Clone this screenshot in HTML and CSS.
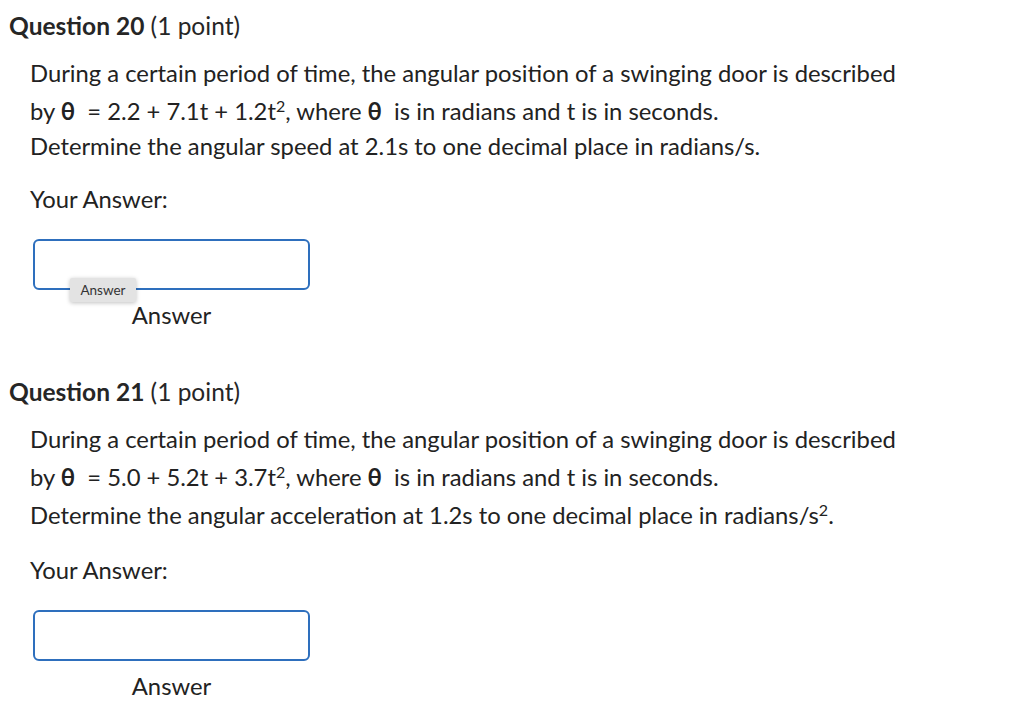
FILE: index.html
```html
<!DOCTYPE html>
<html>
<head>
<meta charset="utf-8">
<link rel="stylesheet" href="styles.css">
</head>
<body>
<section class="question q20">
  <h2 class="q-title"><strong>Question 20</strong> (1 point)</h2>
  <div class="q-body">
    <p class="q-text">During a certain period of time, the angular position of a swinging door is described<br>by <b class="theta">θ</b>&nbsp; = 2.2 + 7.1t + 1.2t<sup>2</sup>, where <b class="theta">θ</b>&nbsp; is in radians and t is in seconds.<br>Determine the angular speed at 2.1s to one decimal place in radians/s.</p>
    <p class="your-answer">Your Answer:</p>
    <div class="answer-field">
      <div class="input-box"></div>
      <span class="tooltip">Answer</span>
      <div class="answer-label">Answer</div>
    </div>
  </div>
</section>
<section class="question q21">
  <h2 class="q-title"><strong>Question 21</strong> (1 point)</h2>
  <div class="q-body">
    <p class="q-text">During a certain period of time, the angular position of a swinging door is described<br>by <b class="theta">θ</b>&nbsp; = 5.0 + 5.2t + 3.7t<sup>2</sup>, where <b class="theta">θ</b>&nbsp; is in radians and t is in seconds.<br>Determine the angular acceleration at 1.2s to one decimal place in radians/s<sup>2</sup>.</p>
    <p class="your-answer">Your Answer:</p>
    <div class="answer-field">
      <div class="input-box"></div>
      <div class="answer-label">Answer</div>
    </div>
  </div>
</section>
</body>
</html>
```
FILE: styles.css
```css
html, body {
  margin: 0;
  padding: 0;
  background: #ffffff;
}
body {
  font-family: Lato, "Open Sans", sans-serif;
  color: #222222;
  width: 1024px;
  height: 711px;
  overflow: hidden;
}
.question {
  padding-left: 9px;
}
.q20 {
  padding-top: 11px;
}
.q21 {
  padding-top: 44px;
}
.q-title {
  margin: 0;
  font-size: 24.5px;
  line-height: 30px;
  font-weight: normal;
  color: #262626;
}
.q-title strong {
  font-weight: bold;
}
.q-body {
  padding-left: 21px;
  padding-top: 15px;
}
.q-text {
  margin: 0;
  font-size: 23.8px;
  line-height: 35px;
}
.q-text sup {
  font-size: 16px;
  vertical-align: 8px;
  line-height: 29px;
}
.theta {
  font-weight: bold;
}
.your-answer {
  margin: 17px 0 0 0;
  font-size: 23.8px;
  line-height: 36px;
}
.q21 .your-answer {
  margin-top: 19px;
}
.answer-field {
  position: relative;
  width: 277px;
  margin-top: 22px;
  margin-left: 3px;
}
.input-box {
  height: 47px;
  border: 2px solid #2e6fbd;
  border-radius: 6px;
}
.tooltip {
  position: absolute;
  left: 37px;
  top: 39px;
  width: 66px;
  height: 24px;
  box-sizing: border-box;
  background: #e3e3e3;
  box-shadow: 0 1px 4px rgba(0, 0, 0, 0.25);
  border-radius: 2px;
  font-size: 13.5px;
  line-height: 24px;
  text-align: center;
  color: #333333;
}
.answer-label {
  text-align: center;
  font-size: 23.8px;
  line-height: 36px;
  margin-top: 7px;
}
```
